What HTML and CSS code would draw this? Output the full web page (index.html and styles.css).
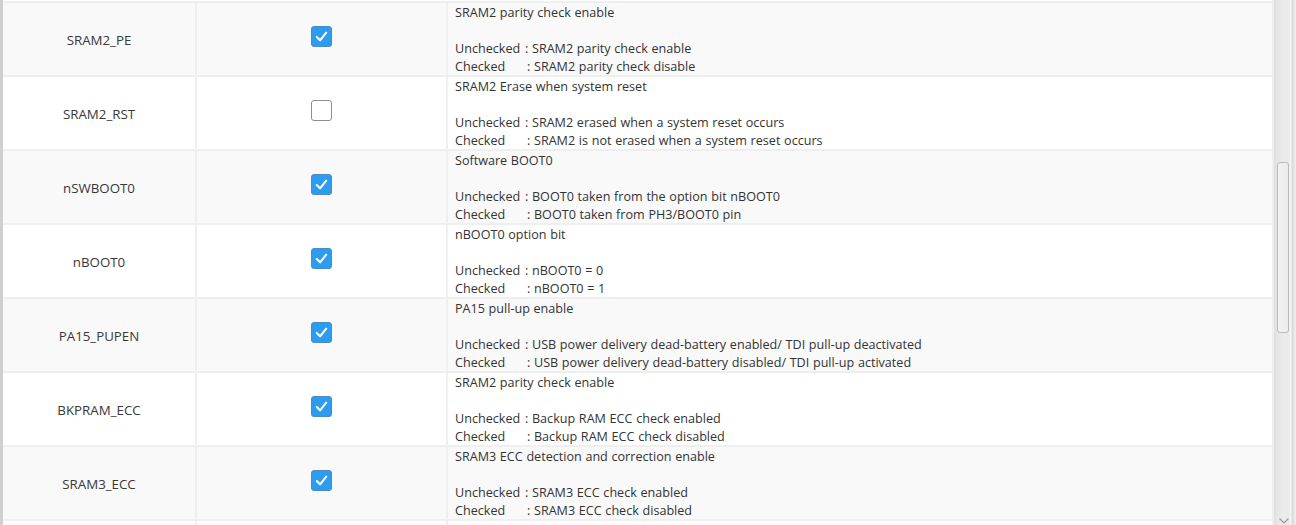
FILE: index.html
```html
<!DOCTYPE html>
<html>
<head>
<meta charset="utf-8">
<link rel="stylesheet" href="styles.css">
</head>
<body>
<div class="view">
  <div class="table">
    <div class="strip"></div>

    <div class="row alt">
      <div class="cell name">SRAM2_PE</div>
      <div class="cell val"><span class="cb on"><svg viewBox="0 0 20 20"><path d="M5 10.5 L8.5 14 L15 6"/></svg></span></div>
      <div class="cell desc">
        <div class="line">SRAM2 parity check enable</div>
        <div class="line"></div>
        <div class="line"><span class="lbl">Unchecked</span>: SRAM2 parity check enable</div>
        <div class="line"><span class="lbl chk">Checked</span>: SRAM2 parity check disable</div>
      </div>
    </div>

    <div class="row">
      <div class="cell name">SRAM2_RST</div>
      <div class="cell val"><span class="cb"></span></div>
      <div class="cell desc">
        <div class="line">SRAM2 Erase when system reset</div>
        <div class="line"></div>
        <div class="line"><span class="lbl">Unchecked</span>: SRAM2 erased when a system reset occurs</div>
        <div class="line"><span class="lbl chk">Checked</span>: SRAM2 is not erased when a system reset occurs</div>
      </div>
    </div>

    <div class="row alt">
      <div class="cell name">nSWBOOT0</div>
      <div class="cell val"><span class="cb on"><svg viewBox="0 0 20 20"><path d="M5 10.5 L8.5 14 L15 6"/></svg></span></div>
      <div class="cell desc">
        <div class="line">Software BOOT0</div>
        <div class="line"></div>
        <div class="line"><span class="lbl">Unchecked</span>: BOOT0 taken from the option bit nBOOT0</div>
        <div class="line"><span class="lbl chk">Checked</span>: BOOT0 taken from PH3/BOOT0 pin</div>
      </div>
    </div>

    <div class="row">
      <div class="cell name">nBOOT0</div>
      <div class="cell val"><span class="cb on"><svg viewBox="0 0 20 20"><path d="M5 10.5 L8.5 14 L15 6"/></svg></span></div>
      <div class="cell desc">
        <div class="line">nBOOT0 option bit</div>
        <div class="line"></div>
        <div class="line"><span class="lbl">Unchecked</span>: nBOOT0 = 0</div>
        <div class="line"><span class="lbl chk">Checked</span>: nBOOT0 = 1</div>
      </div>
    </div>

    <div class="row alt">
      <div class="cell name">PA15_PUPEN</div>
      <div class="cell val"><span class="cb on"><svg viewBox="0 0 20 20"><path d="M5 10.5 L8.5 14 L15 6"/></svg></span></div>
      <div class="cell desc">
        <div class="line">PA15 pull-up enable</div>
        <div class="line"></div>
        <div class="line"><span class="lbl">Unchecked</span>: USB power delivery dead-battery enabled/ TDI pull-up deactivated</div>
        <div class="line"><span class="lbl chk">Checked</span>: USB power delivery dead-battery disabled/ TDI pull-up activated</div>
      </div>
    </div>

    <div class="row">
      <div class="cell name">BKPRAM_ECC</div>
      <div class="cell val"><span class="cb on"><svg viewBox="0 0 20 20"><path d="M5 10.5 L8.5 14 L15 6"/></svg></span></div>
      <div class="cell desc">
        <div class="line">SRAM2 parity check enable</div>
        <div class="line"></div>
        <div class="line"><span class="lbl">Unchecked</span>: Backup RAM ECC check enabled</div>
        <div class="line"><span class="lbl chk">Checked</span>: Backup RAM ECC check disabled</div>
      </div>
    </div>

    <div class="row alt">
      <div class="cell name">SRAM3_ECC</div>
      <div class="cell val"><span class="cb on"><svg viewBox="0 0 20 20"><path d="M5 10.5 L8.5 14 L15 6"/></svg></span></div>
      <div class="cell desc">
        <div class="line">SRAM3 ECC detection and correction enable</div>
        <div class="line"></div>
        <div class="line"><span class="lbl">Unchecked</span>: SRAM3 ECC check enabled</div>
        <div class="line"><span class="lbl chk">Checked</span>: SRAM3 ECC check disabled</div>
      </div>
    </div>

    <div class="row">
      <div class="cell name"></div>
      <div class="cell val"></div>
      <div class="cell desc"></div>
    </div>
  </div>

  <div class="scrollbar">
    <div class="thumb"></div>
    <div class="arrow"><svg viewBox="0 0 12 8"><path d="M1.5 1.5 L6 6 L10.5 1.5"/></svg></div>
  </div>
</div>
</body>
</html>
```

FILE: styles.css
```css
html, body {
  margin: 0;
  padding: 0;
  height: 100%;
  overflow: hidden;
  background: #ffffff;
}

body {
  font-family: "Open Sans", "Noto Sans", sans-serif;
  font-size: 12.6px;
  color: #333333;
}

.view {
  display: flex;
  height: 525px;
}

.table {
  flex: 1;
  display: flex;
  flex-direction: column;
  border-left: 3px solid #cfcfcf;
  border-right: 2px solid #efefef;
  overflow: hidden;
}

.strip {
  height: 1px;
  background: #ffffff;
  flex: none;
}

.row {
  flex: none;
  display: grid;
  grid-template-columns: 192px 251px 1fr;
  height: 72px;
  border-top: 2px solid #efefef;
  background: #ffffff;
}

.row.alt {
  background: #f9f9f9;
}

.cell {
  display: flex;
  align-items: center;
  min-width: 0;
}

.cell + .cell {
  border-left: 2px solid #efefef;
}

.name {
  justify-content: center;
  font-size: 13.3px;
  color: #383838;
  padding-top: 1px;
}

.val {
  justify-content: center;
  padding-bottom: 7px;
}

.desc {
  flex-direction: column;
  align-items: flex-start;
  justify-content: flex-start;
  padding-left: 7px;
  padding-top: 1px;
  white-space: nowrap;
  word-spacing: 0.4px;
}

.line {
  height: 18px;
  line-height: 18px;
}

.lbl {
  display: inline-block;
  width: 70px;
}

.lbl.chk {
  width: 72px;
}

.cb {
  box-sizing: border-box;
  width: 21px;
  height: 21px;
  border: 1px solid #8e8e8e;
  border-radius: 3px;
  background: #ffffff;
  display: flex;
  align-items: center;
  justify-content: center;
}

.cb.on {
  background: #2b9cf0;
  border-color: #4c8cc6;
}

.cb svg {
  width: 19px;
  height: 19px;
}

.cb svg path {
  fill: none;
  stroke: #ffffff;
  stroke-width: 2.2;
  stroke-linecap: round;
  stroke-linejoin: round;
}

.scrollbar {
  flex: none;
  width: 22px;
  display: flex;
  flex-direction: column;
  align-items: flex-start;
  background: linear-gradient(to right, #dddddd 0px, #e6e6e6 3px, #ececec 10px, #e9e9e9 15px, #f4f4f4 16px, #f6f6f6 17px, #d6d6d6 18px, #e6e6e6 20px, #eeeeee 22px);
}

.thumb {
  box-sizing: border-box;
  margin-top: 162px;
  margin-left: 3px;
  width: 12px;
  height: 171px;
  border: 1px solid #b9b9b9;
  border-radius: 3px;
  background: linear-gradient(to right, #f2f2f2, #ececec);
}

.arrow {
  margin-top: auto;
  margin-left: 4px;
  width: 12px;
  height: 8px;
}

.arrow svg {
  display: block;
  width: 12px;
  height: 8px;
}

.arrow svg path {
  fill: none;
  stroke: #9a9a9a;
  stroke-width: 1.2;
}
```
